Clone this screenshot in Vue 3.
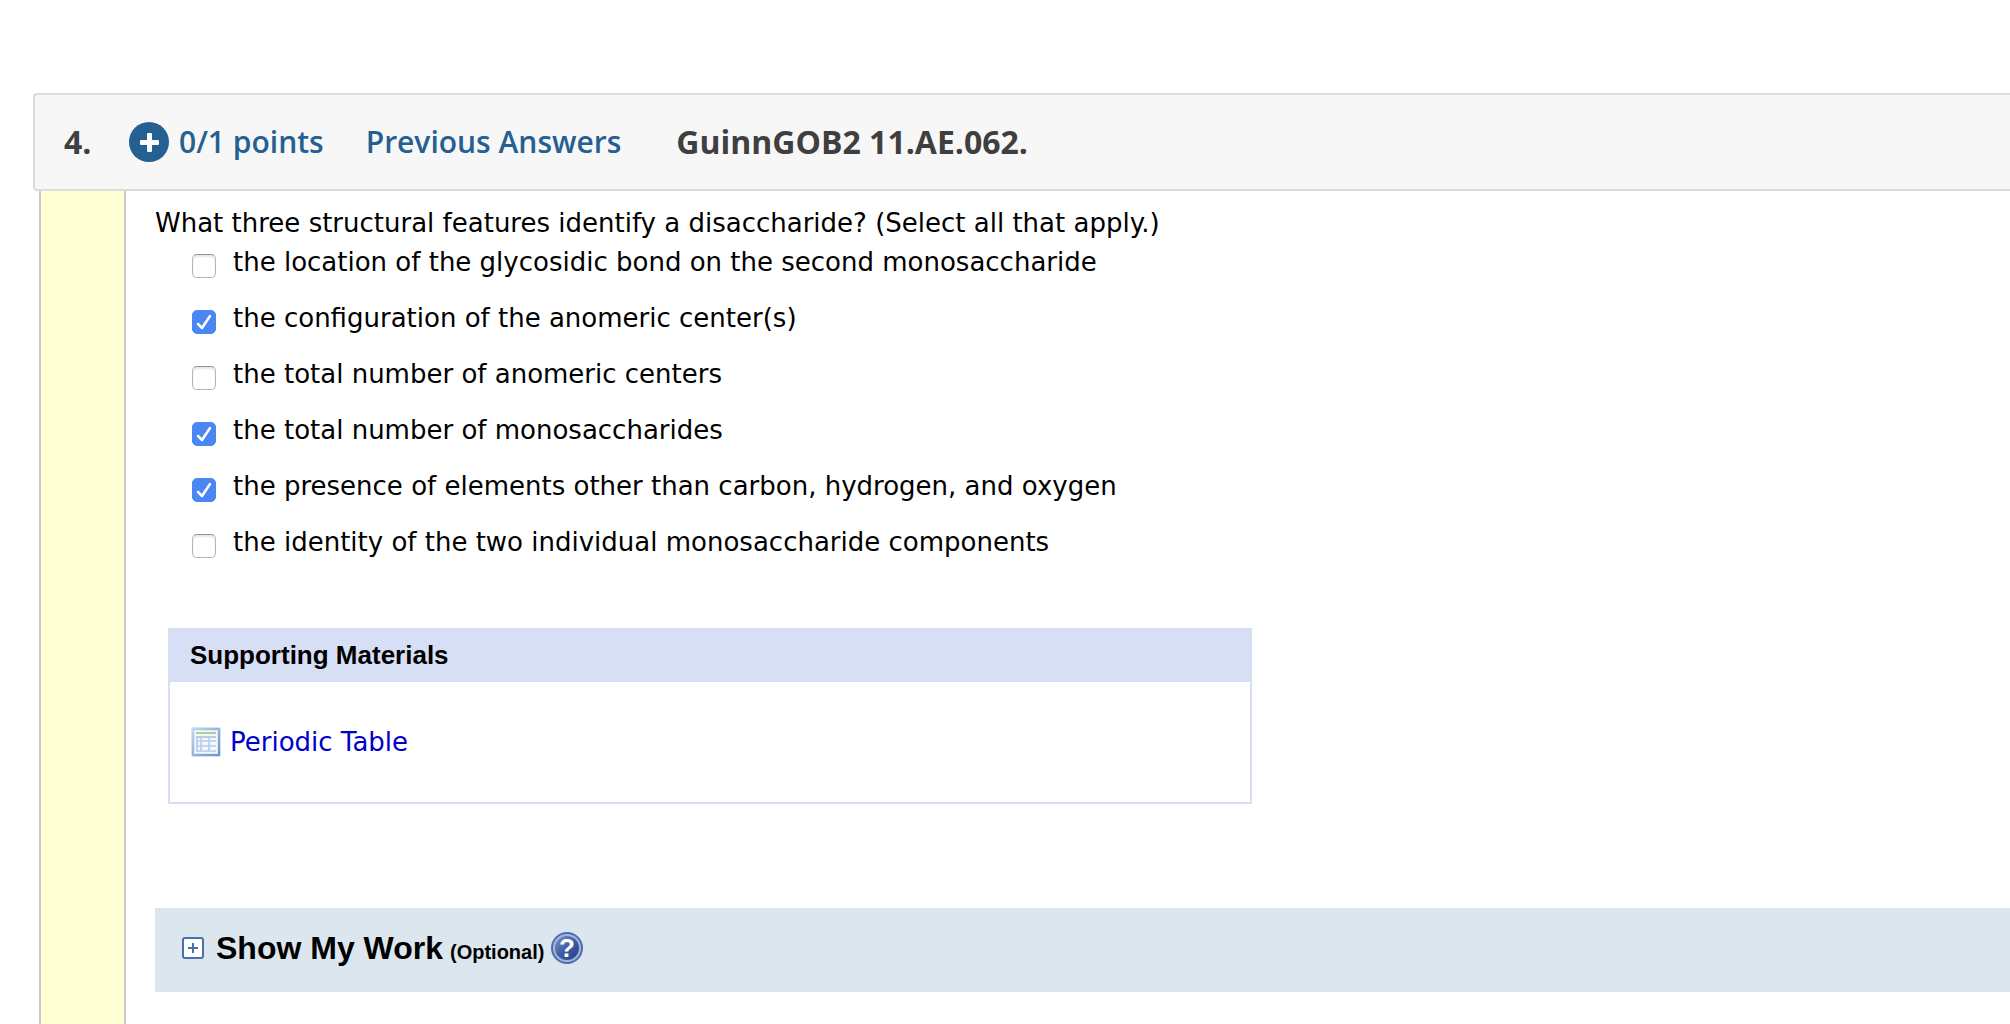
<template>
  <div class="page">
    <header class="question-header">
      <span class="number">4.</span>
      <a href="#points" class="points">
        <svg class="plus-icon" viewBox="0 0 40 40" aria-hidden="true">
          <circle cx="20" cy="20" r="20" fill="#256093" />
          <rect x="11" y="18" width="19" height="5" rx="1" fill="#fff" />
          <rect x="18" y="11" width="5" height="19" rx="1" fill="#fff" />
        </svg>
        <span>0/1 points</span>
      </a>
      <a href="#previous" class="previous">Previous Answers</a>
      <h2 class="source">GuinnGOB2 11.AE.062.</h2>
    </header>

    <div class="question-body">
      <div class="margin-strip"></div>
      <main class="content">
        <fieldset class="question">
          <legend>What three structural features identify a disaccharide? (Select all that apply.)</legend>
          <label v-for="option in options" :key="option.text" class="option">
            <input v-model="option.checked" type="checkbox" />
            <span>{{ option.text }}</span>
          </label>
        </fieldset>

        <section class="materials">
          <h3>Supporting Materials</h3>
          <div class="materials-list">
            <a href="#periodic-table">
              <svg class="table-icon" viewBox="0 0 30 30" aria-hidden="true">
                <defs>
                  <linearGradient id="frame" x1="0" y1="0" x2="1" y2="1">
                    <stop offset="0" stop-color="#c3d8f0" />
                    <stop offset="1" stop-color="#6c8fc8" />
                  </linearGradient>
                </defs>
                <rect x="0" y="0" width="30" height="30" rx="2" fill="#d5e2f3" />
                <rect x="1" y="1" width="28" height="28" rx="1" fill="url(#frame)" />
                <rect x="3" y="3" width="24" height="24" fill="#dfe9f6" />
                <rect x="4" y="4" width="22" height="22" fill="#f4f8fd" />
                <rect x="5" y="5" width="20" height="2" fill="#a9d292" />
                <rect x="5" y="9" width="20" height="2" fill="#b5cbea" />
                <path d="M5 14h20M5 19h20M5 24h20" stroke="#c6d6ee" stroke-width="2" />
                <path d="M6 10v15M10 10v15M18 10v15" stroke="#bfd1ed" stroke-width="2" />
              </svg>
              <span>Periodic Table</span>
            </a>
          </div>
        </section>

        <section class="work">
          <button type="button" class="work-toggle" :aria-expanded="workOpen" @click="workOpen = !workOpen">
            <svg class="expand-icon" viewBox="0 0 22 22" aria-hidden="true">
              <rect x="1" y="1" width="20" height="20" rx="2" fill="#fff" stroke="#4a70a8" stroke-width="2" />
              <path d="M6 11h10" stroke="#4a70a8" stroke-width="2" />
              <path v-if="!workOpen" d="M11 6v10" stroke="#4a70a8" stroke-width="2" />
            </svg>
            <span class="work-title">Show My Work</span>
            <span class="work-note">(Optional)</span>
          </button>
          <button type="button" class="help" aria-label="Help">
            <svg viewBox="0 0 32 32">
              <defs>
                <linearGradient id="ball" x1="0" y1="0" x2="1" y2="1">
                  <stop offset="0" stop-color="#8299ca" />
                  <stop offset="0.5" stop-color="#3d5da3" />
                  <stop offset="1" stop-color="#213f86" />
                </linearGradient>
              </defs>
              <circle cx="16" cy="16" r="16" fill="#4d6eae" />
              <circle cx="16" cy="16" r="13" fill="url(#ball)" stroke="#a3b6d9" stroke-width="2" />
              <text x="16" y="25" text-anchor="middle" class="help-mark">?</text>
            </svg>
          </button>
        </section>
      </main>
    </div>
  </div>
</template>

<script setup>
import { ref } from 'vue'

const workOpen = ref(false)

const options = ref([
  { text: 'the location of the glycosidic bond on the second monosaccharide', checked: false },
  { text: 'the configuration of the anomeric center(s)', checked: true },
  { text: 'the total number of anomeric centers', checked: false },
  { text: 'the total number of monosaccharides', checked: true },
  { text: 'the presence of elements other than carbon, hydrogen, and oxygen', checked: true },
  { text: 'the identity of the two individual monosaccharide components', checked: false }
])
</script>

<style>
body {
  background: #fff;
}
</style>

<style scoped>
.page {
  box-sizing: border-box;
  display: flex;
  flex-direction: column;
  min-height: 100vh;
  padding-top: 93px;
  color: #000;
  font-family: Verdana, 'DejaVu Sans', sans-serif;
  font-size: 26px;
  line-height: 32px;
}

.question-header {
  box-sizing: border-box;
  display: flex;
  align-items: center;
  min-height: 98px;
  margin-left: 33px;
  padding-left: 29px;
  border: 2px solid #dcdcdc;
  border-right: none;
  border-radius: 4px 0 0 4px;
  background: #f7f7f7;
  color: #3f3f3f;
  font-family: 'Open Sans', sans-serif;
  font-size: 30px;
  line-height: 40px;
}

.number {
  width: 65px;
  font-size: 32px;
  font-weight: 700;
}

.question-header a {
  color: #256093;
  font-weight: 600;
  text-decoration: none;
}

.points {
  display: flex;
  align-items: center;
  gap: 10px;
}

.plus-icon {
  width: 40px;
  height: 40px;
}

.previous {
  margin-left: 42px;
}

.source {
  margin: 0 0 0 55px;
  font-size: 32px;
  font-weight: 700;
}

.question-body {
  display: flex;
  flex: 1;
  margin-left: 39px;
}

.margin-strip {
  flex: none;
  width: 83px;
  border: solid #c9c9c9;
  border-width: 0 2px;
  background: #ffffd4;
}

.content {
  flex: 1;
  padding: 16px 0 32px 29px;
}

.question {
  margin: 0;
  padding: 0;
  border: none;
}

.question legend {
  padding: 0;
  margin-bottom: 7px;
}

.option {
  display: flex;
  align-items: flex-start;
  gap: 17px;
  height: 56px;
  padding-left: 37px;
}

.option input {
  appearance: none;
  box-sizing: border-box;
  width: 24px;
  height: 24px;
  margin: 8px 0 0;
  border: 1px solid #b4b4b4;
  border-top-color: #969696;
  border-radius: 5px;
  background: #fff;
  box-shadow: inset 0 2px 2px #e6e6e6;
}

.option input:checked {
  border-color: #4a87f5;
  background: #4a87f5 url("data:image/svg+xml,%3Csvg xmlns='http://www.w3.org/2000/svg' viewBox='0 0 24 24'%3E%3Cpath d='M6 14l4 4L18 6' fill='none' stroke='%23fff' stroke-width='2.5' stroke-linecap='round' stroke-linejoin='round'/%3E%3C/svg%3E") center / 24px no-repeat;
  box-shadow: none;
}

.materials {
  box-sizing: border-box;
  max-width: 1084px;
  margin: 46px 13px 0;
  border: 2px solid #d7dff4;
}

.materials h3 {
  margin: 0;
  padding: 9px 20px 11px;
  background: #d7dff4;
  font: bold 26px/32px 'Liberation Sans', Arial, sans-serif;
}

.materials-list {
  display: flex;
  padding: 44px 21px;
}

.materials a {
  display: flex;
  align-items: center;
  gap: 9px;
  color: #0000cc;
  text-decoration: none;
}

.table-icon {
  width: 30px;
  height: 30px;
}

.work {
  display: flex;
  align-items: center;
  gap: 7px;
  margin-top: 104px;
  padding: 20px 27px 24px;
  background: #dce6ee;
}

.work button {
  padding: 0;
  border: none;
  background: none;
  color: #000;
  cursor: pointer;
}

.work-toggle {
  display: flex;
  align-items: baseline;
  font: bold 32px/40px 'Liberation Sans', Arial, sans-serif;
}

.expand-icon {
  width: 22px;
  height: 22px;
}

.work-title {
  margin: 0 7px 0 12px;
}

.work-note {
  font-size: 20px;
  line-height: 24px;
}

.help svg {
  display: block;
  width: 32px;
  height: 32px;
}

.help-mark {
  fill: #fff;
  font: bold 26px 'Liberation Sans', Arial, sans-serif;
}
</style>
